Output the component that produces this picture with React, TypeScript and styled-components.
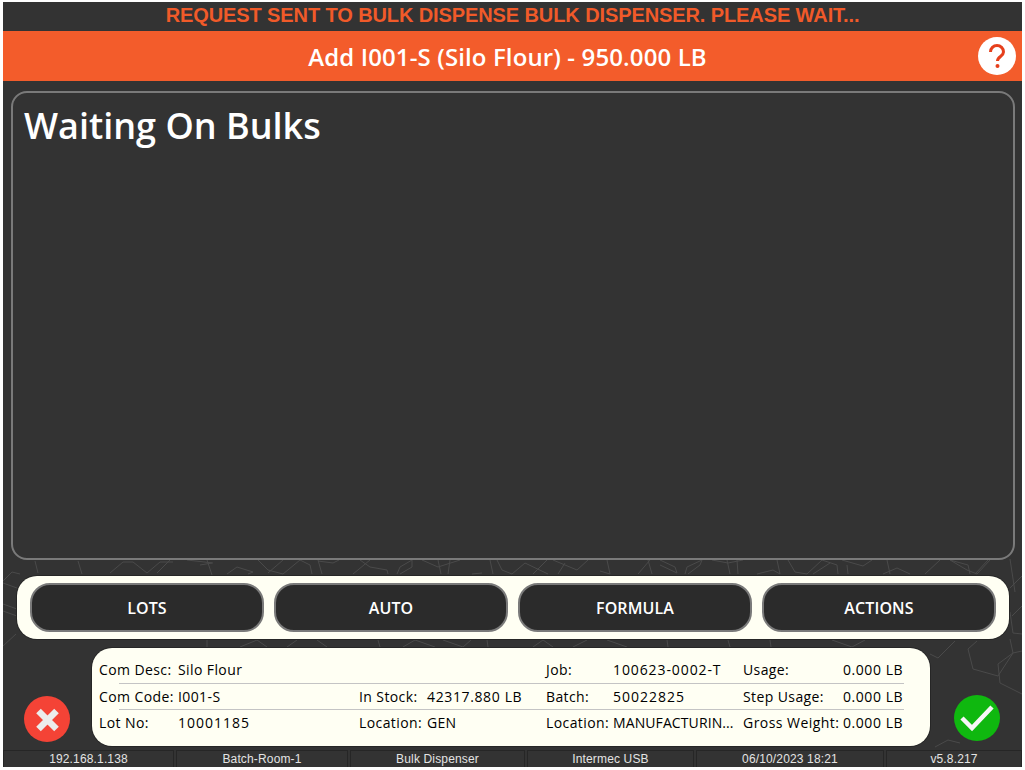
import React from "react";
import styled, { createGlobalStyle } from "styled-components";

const GlobalStyle = createGlobalStyle`
  html, body { margin: 0; padding: 0; background: #fff; }
  * { box-sizing: border-box; }
`;

const Screen = styled.div`
  position: relative;
  width: 1019px;
  height: 765px;
  margin: 2px 0 0 3px;
  background: #333333;
  display: flex;
  flex-direction: column;
  overflow: hidden;
`;

const Pattern = styled.svg`
  position: absolute;
  left: 0;
  top: 0;
  width: 1019px;
  height: 765px;
  pointer-events: none;
`;

const AlertBar = styled.div`
  position: relative;
  height: 29px;
  flex: none;
  padding-bottom: 2px;
  display: flex;
  align-items: center;
  justify-content: center;
  color: #f15a29;
  font: bold 20px "Liberation Sans", Arial, sans-serif;
  letter-spacing: -0.1px;
  white-space: nowrap;
`;

const TitleBar = styled.div`
  position: relative;
  height: 50px;
  flex: none;
  padding-right: 10px;
  background: #f35c2b;
  display: flex;
  align-items: center;
  justify-content: center;
  color: #fff;
  font: 600 24px "Open Sans", sans-serif;
  letter-spacing: 0.12px;
`;

const HelpButton = styled.div`
  position: absolute;
  right: 6px;
  top: 6px;
  width: 38px;
  height: 38px;
  border-radius: 50%;
  background: #fff;
`;

const Body = styled.div`
  position: relative;
  flex: 1;
  display: flex;
  flex-direction: column;
  padding: 10px 7px 0 8px;
`;

const Panel = styled.div`
  height: 469px;
  flex: none;
  background: #333333;
  border: 2px solid #7a7a7a;
  border-radius: 16px;
  padding: 9px 11px;
  color: #fff;
  font: 600 36px/1.35 "Open Sans", sans-serif;
`;

const ActionBar = styled.div`
  height: 63px;
  flex: none;
  margin: 16px 6px 0 6px;
  padding: 7px 13px;
  background: #fffff3;
  border-radius: 20px;
  box-shadow: 0 0 0 1px #262626;
  display: grid;
  grid-template-columns: repeat(4, 1fr);
  gap: 10px;
`;

const ActionButton = styled.div`
  background: #2b2b2b;
  border: 2px solid #7a7a7a;
  border-radius: 20px;
  display: flex;
  align-items: center;
  justify-content: center;
  color: #fff;
  font: 600 16px "Open Sans", sans-serif;
  letter-spacing: 0.1px;
`;

const BottomRow = styled.div`
  display: flex;
  align-items: flex-end;
  margin: 9px 15px 0 13px;
  height: 98px;
`;

const RoundButton = styled.div<{ $color: string; $lift: number }>`
  width: 46px;
  height: 46px;
  flex: none;
  border-radius: 50%;
  background: ${(p) => p.$color};
  margin-bottom: ${(p) => p.$lift}px;
`;

const InfoCard = styled.div`
  width: 838px;
  height: 98px;
  flex: none;
  margin: 0 24px 0 22px;
  background: #fffff3;
  border-radius: 20px;
  box-shadow: 0 0 0 1px #262626;
  padding: 8px 27px 0 7px;
  display: grid;
  grid-template-rows: 27px 26px 26px;
  color: #000;
  font: 500 14px "Open Sans", sans-serif;
`;

const InfoRow = styled.div<{ $ruled?: boolean }>`
  position: relative;
  display: grid;
  grid-template-columns: 79px 181px 68px 119px 67px 130px 100px 1fr;
  align-items: center;
  white-space: nowrap;

  &::after {
    content: "";
    display: ${(p) => (p.$ruled ? "block" : "none")};
    position: absolute;
    left: 20px;
    right: -1px;
    bottom: -1px;
    height: 1px;
    background: #c4c4c4;
  }
`;

const Cell = styled.span<{ $spacing: number }>`
  letter-spacing: ${(p) => p.$spacing}px;
`;

const StatusBar = styled.div`
  position: absolute;
  left: 0;
  right: 0;
  bottom: 0;
  height: 17px;
  display: grid;
  grid-template-columns: 171px 172px 175px 167px 188px 1fr;
  gap: 2px;
`;

const StatusCell = styled.div`
  border: 1px solid #262626;
  border-bottom: none;
  display: flex;
  align-items: center;
  justify-content: center;
  color: #e4e4e4;
  font: 12px "Liberation Sans", Arial, sans-serif;
  letter-spacing: 0.15px;
`;

// text, letter spacing
const rows: [string, number][][] = [
  [["Com Desc:", 0.4], ["Silo Flour", 0.4], ["", 0], ["", 0], ["Job:", 0.4], ["100623-0002-T", 0.9], ["Usage:", 0.4], ["0.000 LB", 0.55]],
  [["Com Code:", 0.4], ["I001-S", 0.4], ["In Stock:", 0.4], ["42317.880 LB", 0.63], ["Batch:", 0.4], ["50022825", 1], ["Step Usage:", 0.4], ["0.000 LB", 0.55]],
  [["Lot No:", 0.4], ["10001185", 1], ["Location:", 0.4], ["GEN", 0.3], ["Location:", 0.4], ["MANUFACTURIN...", 0.1], ["Gross Weight:", 0.45], ["0.000 LB", 0.55]],
];

const status = ["192.168.1.138", "Batch-Room-1", "Bulk Dispenser", "Intermec USB", "06/10/2023 18:21", "v5.8.217"];

// background circuit lines, in page coordinates
const lines = [
  "M207 560l5 15M200 565l12-2",
  "M227 574l10-7 16 5-5 2",
  "M258 560l10 10 15 4 17-14 10 5 2 9M268 573l15-13",
  "M318 560l4 14M318 561l15 2 6-3",
  "M353 574l17-14M360 560l10 7 17 3 1 4",
  "M397 574l3-7 12-7v7l-12 7",
  "M422 560l16 7 22-7M438 560l3 14M450 560l-2 14",
  "M472 574l10-1M490 560l3 14M497 560l5 10 10 4 13-11 23 11M533 574l14-14",
  "M553 560l24 10 11-10M558 574l7-11",
  "M600 571l10 3M607 560l3 14M638 574l12-14M648 560l4 14M660 565l17 8-2-6-15-7",
  "M685 574l2-7 15-7-2 5-12 9",
  "M712 560l16 3 15-3M727 560l3 14M737 560l1 14",
  "M757 574l16-4 7 4-3-14M788 560l7 12 12 2 15-14 15 5 1 9M813 574l17-11",
  "M842 560l21 6 9-6M847 565l1 9M887 560l3 14M883 574l14-6 13 6",
  "M925 574l15-14M950 560l17 10 10 4 13-14M950 560l18 5 2 9M975 574l13-14",
  "M1010 559l5 33M1010 588l12-12M1012 616l10-10M1010 612l3 21 9 1",
  "M955 641l-17 17-8-4",
  "M977 641l-9 8 5 20 25 7 15-23 9-2M998 664l2 19 22 11M998 664l15-11M1010 639l3 14",
  "M935 747l13-7 12 3",
  "M3 581l9-9 8 2M3 583l14 5M3 604l14 5M3 611l14 5M3 646l13-12",
  "M35 561l3 12M78 561l4 13",
  "M110 573l13-11h10l14 11 13-11h13M157 573l13-13M187 560l26 3",
  "M207 640v7M240 647l17-7 10 7M287 647l10-7M317 640l10 7",
  "M378 640l2 7M403 647l12-7 20 7M443 640l20 7 8-7M487 640l1 7",
  "M533 647l10-7 10 7M573 647l14-7M607 640l20 7M667 640l1 7",
  "M728 640l2 7M770 640l1 7M832 640l20 7 13-7",
];

export default function App() {
  return (
    <>
      <GlobalStyle />
      <Screen>
        <Pattern viewBox="3 2 1019 765" fill="none" stroke="#4a4a4a" strokeWidth="1">
          {lines.map((d) => (
            <path key={d} d={d} />
          ))}
        </Pattern>
        <AlertBar>REQUEST SENT TO BULK DISPENSE BULK DISPENSER. PLEASE WAIT...</AlertBar>
        <TitleBar>
          Add I001-S (Silo Flour) - 950.000 LB
          <HelpButton>
            <svg width="38" height="38" viewBox="0 0 38 38">
              <path d="M12.5 15a6.5 6.5 0 0 1 13 0c0 4.5-6 4.5-6 9" fill="none" stroke="#e63f1c" strokeWidth="3" />
              <circle cx="19.5" cy="29" r="2" fill="#e63f1c" />
            </svg>
          </HelpButton>
        </TitleBar>
        <Body>
          <Panel>Waiting On Bulks</Panel>
          <ActionBar>
            {["LOTS", "AUTO", "FORMULA", "ACTIONS"].map((label) => (
              <ActionButton key={label}>{label}</ActionButton>
            ))}
          </ActionBar>
          <BottomRow>
            <RoundButton $color="#f44336" $lift={4}>
              <svg width="46" height="46" viewBox="0 0 46 46">
                <path d="M14.5 15l18 18M32.5 15l-18 18" stroke="#ececec" strokeWidth="6.5" />
              </svg>
            </RoundButton>
            <InfoCard>
              {rows.map((row, i) => (
                <InfoRow key={row[0][0]} $ruled={i < 2}>
                  {row.map(([text, spacing], j) => (
                    <Cell key={j} $spacing={spacing}>
                      {text}
                    </Cell>
                  ))}
                </InfoRow>
              ))}
            </InfoCard>
            <RoundButton $color="#0fb80f" $lift={5}>
              <svg width="46" height="46" viewBox="0 0 46 46">
                <path d="M8 23l10 10 20-21" fill="none" stroke="#f6f6f6" strokeWidth="4.5" />
              </svg>
            </RoundButton>
          </BottomRow>
        </Body>
        <StatusBar>
          {status.map((s) => (
            <StatusCell key={s}>{s}</StatusCell>
          ))}
        </StatusBar>
      </Screen>
    </>
  );
}
